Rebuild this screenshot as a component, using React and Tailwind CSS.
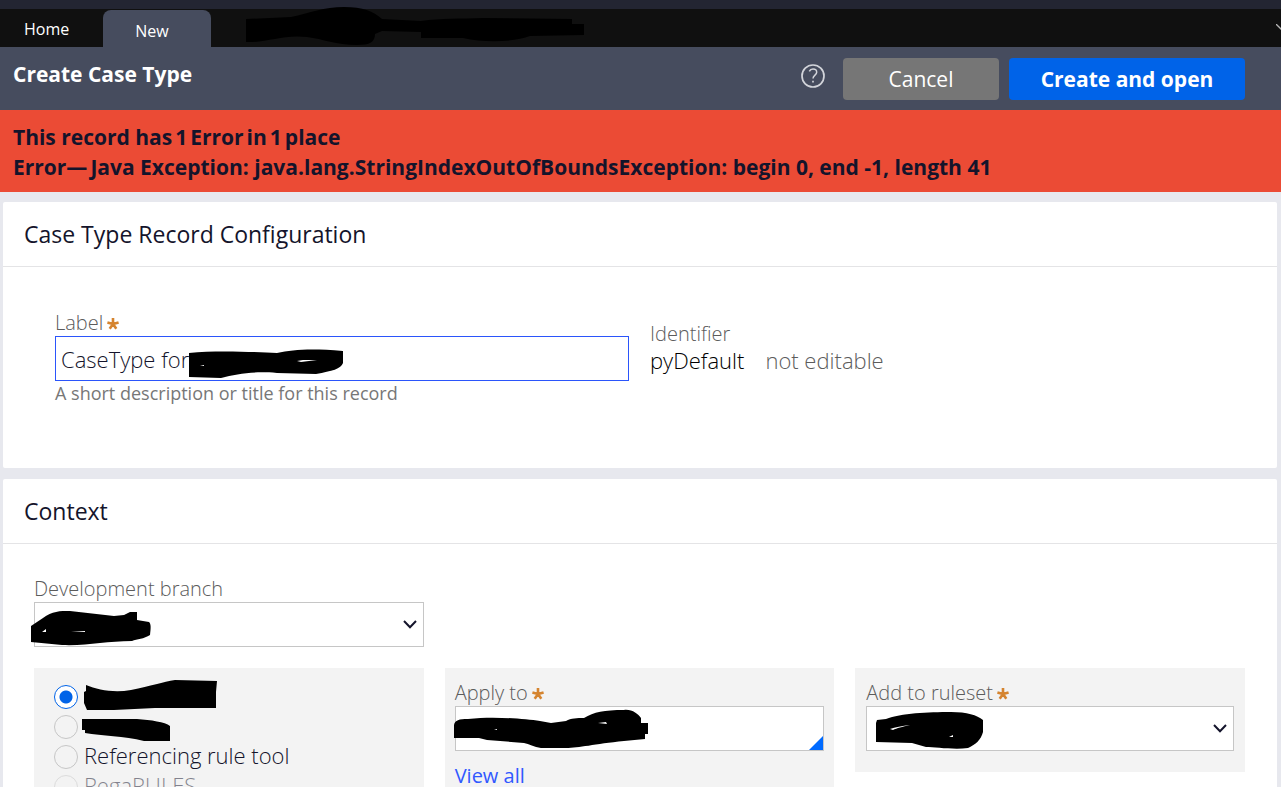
import React, { useState } from 'react';
import { clsx } from 'clsx';

// Freehand marker strokes that hide private values
const Redaction = ({ width, height, path, specks, className }) => (
  <svg
    aria-hidden="true"
    width={width}
    height={height}
    viewBox={`0 0 ${width} ${height}`}
    className={clsx("absolute pointer-events-none", className)}
  >
    <path d={path} fill="#000" />
    {specks && <path d={specks} fill="#fff" />}
  </svg>
);

const RequiredMark = () => (
  <svg aria-hidden="true" width="12" height="12" viewBox="0 0 12 12" className="mt-[2px]" stroke="#d5842f" strokeWidth="2.6">
    <path d="M6 6V0M6 6L0.4 4.4M6 6L11.6 4.4M6 6L2.7 10.8M6 6L9.3 10.8" fill="none" />
  </svg>
);

const FieldLabel = ({ htmlFor, required, children }) => (
  <label htmlFor={htmlFor} className="flex items-center gap-1 h-[27px] text-[20px] leading-[27px] text-[#5c5c5c]">
    {children}
    {required && <RequiredMark />}
  </label>
);

const SelectBox = ({ id, children }) => (
  <div className="relative">
    <select id={id} className="block w-full h-[45px] px-2 appearance-none bg-white border border-[#c6c6c6] text-[20px] text-[#14142b]">
      <option value=""></option>
    </select>
    <svg
      aria-hidden="true"
      width="14"
      height="9"
      viewBox="0 0 14 9"
      className="absolute right-[7px] top-[18px] pointer-events-none"
      fill="none"
      stroke="#14142b"
      strokeWidth="2"
    >
      <path d="M1 1L7 7.2L13 1" />
    </svg>
    {children}
  </div>
);

const RadioOption = ({ name, label, ariaLabel, checked, disabled, onChange, children }) => (
  <label className={clsx("relative flex items-center gap-[6px] h-[30px]", disabled && "opacity-50")}>
    <input
      type="radio"
      name={name}
      aria-label={ariaLabel}
      checked={checked}
      disabled={disabled}
      onChange={onChange}
      className="appearance-none shrink-0 w-6 h-6 rounded-full border border-[#c6c6c6] bg-[#f3f3f3] checked:border-[#0063e8] checked:bg-white checked:bg-[radial-gradient(circle,#0063e8_6px,transparent_7px)]"
    />
    <span className="pb-1 text-[22px] leading-[26px] text-[#14142b]">{label}</span>
    {children}
  </label>
);

const Section = ({ title, className, children }) => (
  <section className="bg-white rounded-xs">
    <h2 className="h-[65px] pl-[21px] border-b border-[#e4e4e6] text-[23px] leading-[64px] font-normal text-[#14142b]">
      {title}
    </h2>
    <div className={clsx("pl-[31px] pr-8", className)}>{children}</div>
  </section>
);

const App = () => {
  const [label, setLabel] = useState("CaseType for ");
  const [applyTo, setApplyTo] = useState("");
  const [layer, setLayer] = useState("first");

  return (
    <div className="h-screen overflow-hidden bg-[#e7e8ee] font-['Open_Sans','Noto_Sans',sans-serif] font-light">
      <div className="h-[9px] bg-[#232532]" />

      {/* Tabs */}
      <nav className="relative flex h-[38px] bg-[#101010] text-[16px] leading-6 font-normal text-white">
        <button className="w-[103px] pl-6 pt-[2px] text-left">Home</button>
        <button className="w-[108px] h-[37px] mt-[1px] pr-[10px] pt-1 rounded-t-lg bg-[#464c5e]">New</button>
        <Redaction
          className="left-[245px] -top-[2px]"
          width={340}
          height={40}
          path="M1 12L46 10C65 6 79 0 99 0C118 0 128 4 137 12L176 14C196 11 216 12 238 11L327 12V17H339V28L285 29C270 35 240 36 218 31H176V25L137 24L130 27C130 35 125 38 112 38C91 38 78 32 62 30C39 27 20 36 1 35Z"
        />
        <svg
          aria-hidden="true"
          width="5"
          height="8"
          viewBox="0 0 5 8"
          className="absolute right-0 top-[15px]"
          fill="none"
          stroke="#b5b5b5"
          strokeWidth="1.3"
        >
          <path d="M0 0L7 7" />
        </svg>
      </nav>

      {/* Header */}
      <header className="flex items-start h-[63px] pl-[13px] pr-9 bg-[#464c5e] text-white">
        <h1 className="flex-1 pt-[11px] text-[21px] leading-8 font-bold">Create Case Type</h1>
        <button aria-label="Help" className="mt-[17px] mr-[18px]">
          <svg width="24" height="24" viewBox="0 0 24 24" fill="none" stroke="#d2d4da">
            <circle cx="12" cy="12" r="11" strokeWidth="1.7" />
            <path d="M8.3 7.4C9 5.8 10.2 5.1 12 5.1C14.2 5.1 15.7 6.3 15.7 8.2C15.7 11.2 12 11 12 14.6" strokeWidth="1.5" />
            <path d="M12 16.8V18.6" strokeWidth="1.7" />
          </svg>
        </button>
        <div className="flex gap-[10px] pt-[11px] text-[21px]">
          <button className="w-[156px] h-[42px] pt-[2px] rounded-sm bg-[#767676] font-normal">Cancel</button>
          <button className="w-[236px] h-[42px] pt-[2px] rounded-sm bg-[#0063e8] font-bold">Create and open</button>
        </div>
      </header>

      {/* Error banner */}
      <div role="alert" className="h-[82px] px-[13px] pt-3 bg-[#eb4b35] text-[21px] leading-[30px] font-bold text-[#14142b]">
        <p className="flex gap-[3px]">
          <span>This record has</span>
          <span>1</span>
          <span>Error</span>
          <span>in</span>
          <span>1</span>
          <span>place</span>
        </p>
        <p className="flex gap-[3px]">
          <span>Error—</span>
          <span>Java Exception: java.lang.StringIndexOutOfBoundsException: begin 0, end -1, length 41</span>
        </p>
      </div>

      <main className="flex flex-col gap-[11px] pt-[10px] pl-[3px] pr-1">
        <Section title="Case Type Record Configuration" className="grid grid-cols-2 gap-[21px] pt-[42px] pb-[63px]">
          <div className="pl-[21px]">
            <FieldLabel htmlFor="label" required>Label</FieldLabel>
            <div className="relative">
              <input
                id="label"
                type="text"
                value={label}
                onChange={(e) => setLabel(e.target.value)}
                className="block w-full h-[45px] px-[5px] bg-white border border-[#2b55fb] outline-none text-[22px] text-[#14142b]"
              />
              <Redaction
                className="left-[134px] top-[13px]"
                width={155}
                height={31}
                path="M0 4C28 1 65 3 88 4C104 1 119 -1 154 2V14C152 20 143 22 127 25L88 24C63 22 48 25 32 29L0 28Z"
                specks="M108 12L114 11L128 11L120 12L112 13ZM11 16L15 16L15 17Z"
              />
            </div>
            <p className="text-[18px] leading-6 font-normal text-[#777777]">A short description or title for this record</p>
          </div>
          <div className="pt-[11px]">
            <p className="text-[20px] leading-[27px] text-[#5c5c5c]">Identifier</p>
            <p className="flex gap-[21px] text-[22px] leading-[27px]">
              <span className="text-black">pyDefault</span>
              <span className="text-[#5c5c5c]">not editable</span>
            </p>
          </div>
        </Section>

        <Section title="Context" className="pt-[31px] pb-8">
          <div className="grid grid-cols-3 gap-[21px]">
            <div>
              <FieldLabel htmlFor="branch">Development branch</FieldLabel>
              <SelectBox id="branch">
                <Redaction
                  className="-left-[4px] top-[8px]"
                  width={122}
                  height={36}
                  path="M1 16L13 8C22 1 30 1 40 1L84 6L94 5L100 2H107V10L119 12C121 14 121 17 120 25C114 29 107 29 102 31C76 31 58 36 32 35L1 32Z"
                  specks="M12 22L16 19L16 22ZM41 22L55 21L55 22Z"
                />
              </SelectBox>
            </div>
          </div>

          <div className="grid grid-cols-3 items-start gap-[21px] pt-[21px]">
            <fieldset className="px-5 pt-[14px] pb-5 bg-[#f3f3f3]">
              <RadioOption name="layer" ariaLabel="First layer" checked={layer === "first"} onChange={() => setLayer("first")}>
                <Redaction
                  className="left-[29px] -top-[3px]"
                  width={135}
                  height={32}
                  path="M3 6C15 11 31 14 48 11C68 7 80 3 92 1L134 2L133 13V29H72L31 31H4L1 24V13L3 12Z"
                />
              </RadioOption>
              <RadioOption name="layer" ariaLabel="Second layer" checked={layer === "second"} onChange={() => setLayer("second")}>
                <Redaction
                  className="left-[28px] top-[6px]"
                  width={90}
                  height={24}
                  path="M0 1H55C69 2 83 4 88 8V23H62C42 18 20 18 3 15V12H0Z"
                />
              </RadioOption>
              <RadioOption
                name="layer"
                label="Referencing rule tool"
                checked={layer === "referencing"}
                onChange={() => setLayer("referencing")}
              />
              <RadioOption name="layer" label="PegaRULES" checked={false} disabled onChange={() => {}} />
            </fieldset>

            <div className="px-[10px] pt-[11px] pb-5 bg-[#f3f3f3]">
              <FieldLabel htmlFor="apply-to" required>Apply to</FieldLabel>
              <div className="relative">
                <input
                  id="apply-to"
                  type="text"
                  value={applyTo}
                  onChange={(e) => setApplyTo(e.target.value)}
                  className="block w-full h-[45px] px-[5px] bg-white border border-[#c6c6c6] text-[22px] text-[#14142b]"
                />
                <svg aria-hidden="true" width="14" height="14" viewBox="0 0 14 14" className="absolute right-[1px] bottom-[1px]">
                  <path d="M14 0V14H0Z" fill="#006aff" />
                </svg>
                <Redaction
                  className="-left-[1px] top-[3px]"
                  width={195}
                  height={40}
                  path="M0 16C1 11 5 10 14 10C41 7 70 10 86 12L97 14L112 12C117 9 123 9 130 9C140 3 150 1 170 1C178 0 184 5 187 9V14H194V25H191V30L170 32C140 35 125 39 112 39H87C80 38 75 35 70 34L33 31L25 29L0 29Z"
                  specks="M144 14L152 13L153 15ZM40 20L43 20L43 21Z"
                />
              </div>
              <a href="#" className="block mt-[11px] text-[20px] leading-7 font-normal text-[#3058ff]">View all</a>
            </div>

            <div className="px-[11px] pt-[11px] pb-[21px] bg-[#f3f3f3]">
              <FieldLabel htmlFor="ruleset" required>Add to ruleset</FieldLabel>
              <SelectBox id="ruleset">
                <Redaction
                  className="left-[10px] top-[6px]"
                  width={108}
                  height={38}
                  path="M0 11L1 8L10 7C25 1 52 0 75 0C91 0 101 3 107 8V20C105 28 99 33 92 36C78 38 59 35 50 35L36 31L0 30Z"
                  specks="M14 17C19 15 26 14 34 13C26 15 21 16 17 18ZM73 25L77 23L77 25Z"
                />
              </SelectBox>
            </div>
          </div>
        </Section>
      </main>
    </div>
  );
};

export default App;
